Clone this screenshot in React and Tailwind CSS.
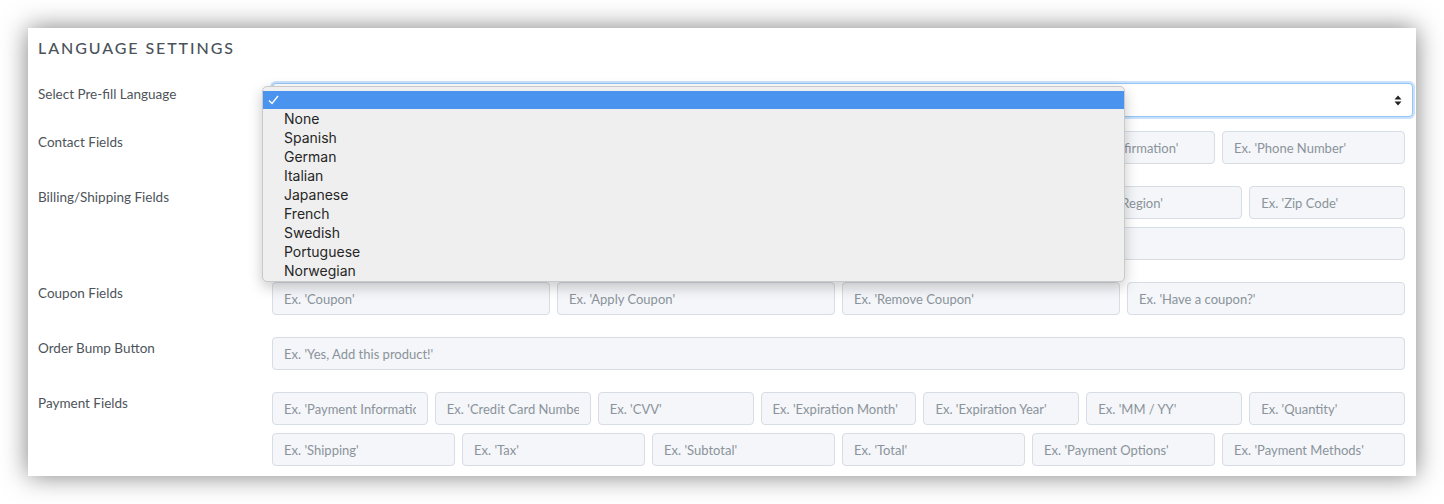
import React from 'react'

const font = { fontFamily: 'Lato, "Open Sans", sans-serif' }

const languages = ['None', 'Spanish', 'German', 'Italian', 'Japanese', 'French', 'Swedish', 'Portuguese', 'Norwegian']

const sections = [
  {
    label: 'Contact Fields',
    rows: [['First Name', 'Last Name', 'Full Name', 'Email', 'Email Confirmation', 'Phone Number']],
  },
  {
    label: 'Billing/Shipping Fields',
    rows: [
      ['Street Address', 'Address Line 2', 'City', 'Country', 'State', 'Region', 'Zip Code'],
      ['Shipping Address'],
    ],
  },
  {
    label: 'Coupon Fields',
    rows: [['Coupon', 'Apply Coupon', 'Remove Coupon', 'Have a coupon?']],
  },
  {
    label: 'Order Bump Button',
    rows: [['Yes, Add this product!']],
  },
  {
    label: 'Payment Fields',
    rows: [
      ['Payment Information', 'Credit Card Number', 'CVV', 'Expiration Month', 'Expiration Year', 'MM / YY', 'Quantity'],
      ['Shipping', 'Tax', 'Subtotal', 'Total', 'Payment Options', 'Payment Methods'],
    ],
  },
]

function Field({ text }) {
  return (
    <input
      readOnly
      placeholder={`Ex. '${text}'`}
      style={font}
      className="w-0 min-w-0 flex-1 h-[33px] rounded-[4px] border border-[#d6dde4] bg-[#f4f6f9] px-[11px] text-[13px] text-[#4a5057] placeholder:text-[#8b939b] outline-none"
    />
  )
}

function Label({ children }) {
  return (
    <div className="w-[234px] shrink-0 pt-[2px] text-[13.5px] leading-[18px] text-[#4e545a]">{children}</div>
  )
}

function Dropdown() {
  return (
    <div
      className="absolute left-[262px] top-[86px] w-[863px] h-[196px] rounded-[5px] border border-[#c9c9c9] bg-[#efefef] pt-[4px] shadow-[0_5px_14px_rgba(0,0,0,0.22)]"
      style={{ fontFamily: 'Inter, "Liberation Sans", sans-serif' }}
    >
      <div className="flex h-[18px] items-center bg-[#4a93ee] pl-[5px]">
        <svg width="11" height="10" viewBox="0 0 11 10">
          <path d="M1 5.5 L4 8.5 L10 1" fill="none" stroke="#fff" strokeWidth="1.4" />
        </svg>
      </div>
      {languages.map(l => (
        <div key={l} className="h-[19px] pl-[21px] text-[14px] leading-[19px] text-[#262626]">{l}</div>
      ))}
    </div>
  )
}

export default function App() {
  return (
    <div className="relative h-[504px] w-[1444px] overflow-hidden bg-white pt-[28px] pl-[28px]" style={font}>
      <div className="h-[448px] w-[1388px] bg-white pl-[10px] pr-[11px] pt-[10px] shadow-[0_0_24px_rgba(0,0,0,0.5)]">
        <h2 className="mb-[25px] text-[16px] leading-[20px] tracking-[0.12em] text-[#4a525a] font-medium">LANGUAGE SETTINGS</h2>

        <div className="mb-[14px] flex">
          <Label>Select Pre-fill Language</Label>
          <div className="mr-[-8px] flex h-[34px] flex-1 items-center justify-end rounded-[4px] border border-[#94c6f5] bg-white pr-[10px] shadow-[0_0_0_2px_rgba(120,180,245,0.4)]">
            <svg width="8" height="11" viewBox="0 0 8 11">
              <path d="M4 0.5 L7.5 4.5 L0.5 4.5 Z" fill="#222" />
              <path d="M4 10.5 L7.5 6.5 L0.5 6.5 Z" fill="#222" />
            </svg>
          </div>
        </div>

        {sections.map(s => (
          <div key={s.label} className="mb-[22px] flex">
            <Label>{s.label}</Label>
            <div className="flex flex-1 flex-col gap-[8px]">
              {s.rows.map((row, i) => (
                <div key={i} className="flex gap-[7px]">
                  {row.map(t => <Field key={t} text={t} />)}
                </div>
              ))}
            </div>
          </div>
        ))}
      </div>
      <Dropdown />
    </div>
  )
}
